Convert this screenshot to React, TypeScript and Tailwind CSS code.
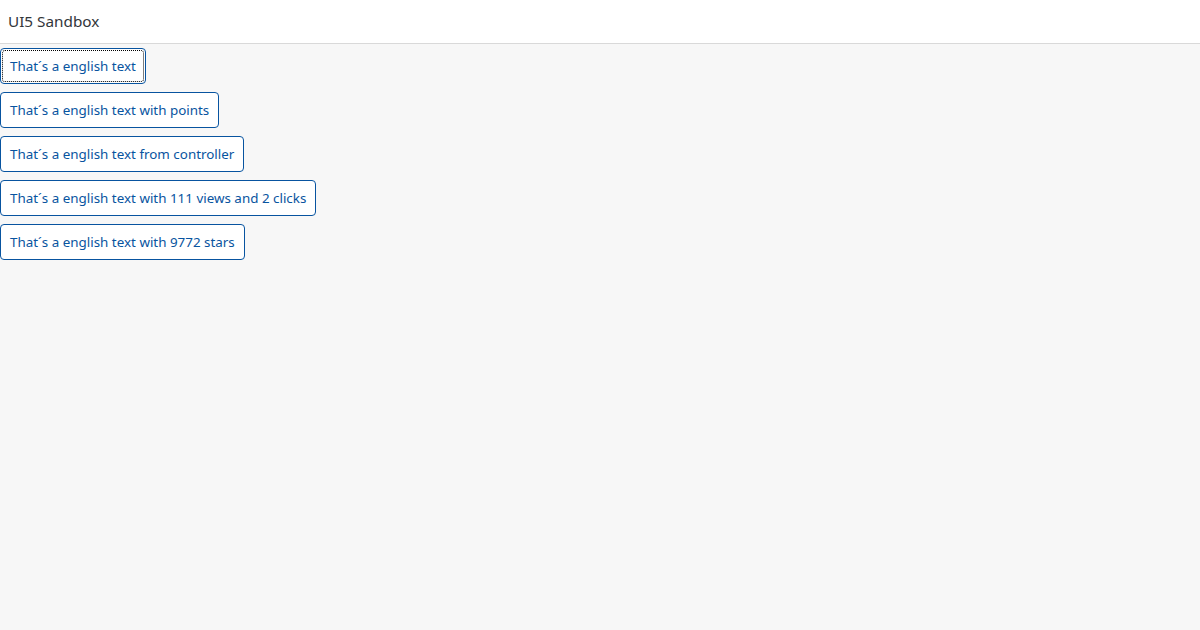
const buttons = [
  "That´s a english text",
  "That´s a english text with points",
  "That´s a english text from controller",
  "That´s a english text with 111 views and 2 clicks",
  "That´s a english text with 9772 stars",
];

export default function App() {
  return (
    <div className="flex h-[630px] w-[1200px] flex-col bg-[#f7f7f7] font-['Noto_Sans',sans-serif]">
      <header className="flex h-11 shrink-0 items-center border-b border-[#d9d9d9] bg-white px-2">
        <span className="text-[15.3px] text-[#32363a]">UI5 Sandbox</span>
      </header>
      <main className="flex flex-col items-start gap-2 pt-1">
        {buttons.map((label, i) => (
          <button
            key={label}
            className="relative flex h-9 items-center rounded border border-[#0854a0] bg-white px-[9px] text-[13.4px] text-[#0854a0]"
          >
            {i === 0 && (
              <span className="pointer-events-none absolute inset-px rounded-[3px] border border-dotted border-black" />
            )}
            {label}
          </button>
        ))}
      </main>
    </div>
  );
}
